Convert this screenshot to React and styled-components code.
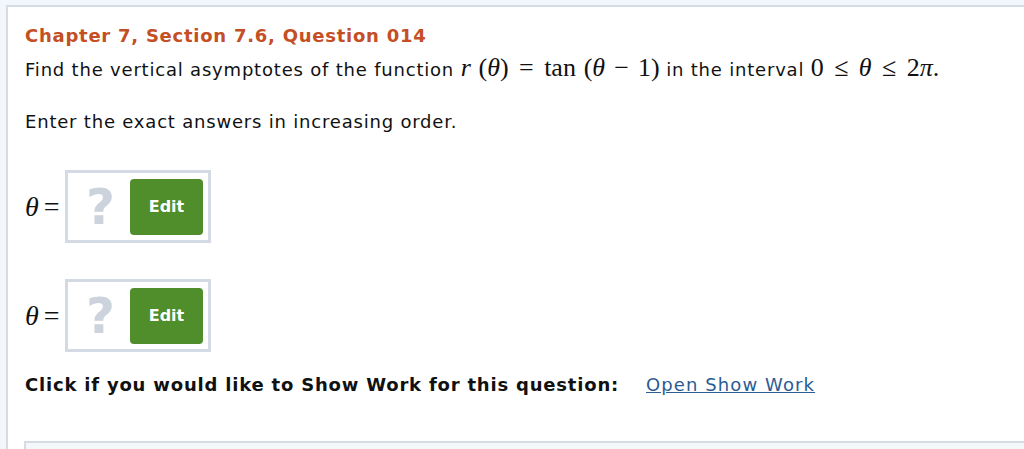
import React from "react";
import styled, { createGlobalStyle } from "styled-components";

const GlobalStyle = createGlobalStyle`
  html, body {
    margin: 0;
    padding: 0;
    background: #f3f6fa;
    overflow: hidden;
  }
`;

const Page = styled.div`
  padding: 5px 0 0 6px;
  height: 449px;
  box-sizing: border-box;
  overflow: hidden;
`;

const Panel = styled.div`
  background: #ffffff;
  border-top: 2px solid #d5dce6;
  border-left: 2px solid #d5dce6;
  height: 100%;
  padding: 17px 0 0 17px;
  box-sizing: border-box;
  font-family: "DejaVu Sans", Verdana, sans-serif;
  color: #111;
`;

const Title = styled.h2`
  margin: 0;
  font-size: 18px;
  font-weight: 700;
  letter-spacing: 0.75px;
  color: #c44f25;
  line-height: 24px;
`;

const Text = styled.p`
  margin: ${({ $mt }) => $mt || 0}px 0 0;
  font-size: 18px;
  letter-spacing: 0.8px;
  line-height: 28px;
  white-space: nowrap;
`;

const Math = styled.span`
  font-family: "Liberation Serif", "Times New Roman", serif;
  font-size: 26px;
  letter-spacing: 0;
  font-style: ${({ $italic }) => ($italic ? "italic" : "normal")};
  margin: ${({ $space }) => $space || "0"};
`;

const AnswerRow = styled.div`
  display: flex;
  align-items: center;
  margin-top: ${({ $mt }) => $mt}px;
`;

const Label = styled.span`
  font-family: "Liberation Serif", "Times New Roman", serif;
  font-size: 28px;
  width: 40px;
  display: flex;
  gap: 5px;
`;

const AnswerBox = styled.div`
  width: 146px;
  height: 73px;
  box-sizing: border-box;
  border: 3px solid #d3dae3;
  display: flex;
  align-items: center;
  padding-left: 18px;
  gap: 16px;
`;

const Unknown = styled.span`
  font-family: "DejaVu Sans", sans-serif;
  font-weight: 700;
  font-size: 50px;
  line-height: 1;
  color: #ccd3dc;
  width: 28px;
  text-align: center;
`;

const EditButton = styled.button`
  width: 73px;
  height: 56px;
  border: none;
  border-radius: 4px;
  background: #4f8e2a;
  color: #fff;
  font-family: "DejaVu Sans", sans-serif;
  font-weight: 700;
  font-size: 16px;
  cursor: pointer;
`;

const ShowWork = styled.div`
  display: flex;
  align-items: baseline;
  gap: 27px;
  margin-top: 22px;
  white-space: nowrap;
`;

const ShowLabel = styled.span`
  font-size: 18px;
  font-weight: 700;
  letter-spacing: 0.8px;
`;

const Link = styled.a`
  font-size: 18px;
  letter-spacing: 1.1px;
  color: #2b5c94;
  text-decoration: underline;
  cursor: pointer;
`;

const WorkArea = styled.div`
  margin-top: 46px;
  margin-left: -1px;
  height: 60px;
  background: #f5f8fb;
  border-top: 2px solid #d5dce6;
  border-left: 2px solid #d5dce6;
`;

const rel = "0 0.4em";
const bin = "0 0.35em";
const fn = "0 0.3em 0 0";

const answers = [{ mt: 34 }, { mt: 36 }];

export default function App() {
  return (
    <>
      <GlobalStyle />
      <Page>
        <Panel>
          <Title>Chapter 7, Section 7.6, Question 014</Title>
          <Text $mt={6}>
            Find the vertical asymptotes of the function{" "}
            <Math $italic $space={fn}>r</Math>
            <Math>(</Math>
            <Math $italic>θ</Math>
            <Math>)</Math>
            <Math $space={rel}>=</Math>
            <Math $space={fn}>tan</Math>
            <Math>(</Math>
            <Math $italic>θ</Math>
            <Math $space={bin}>−</Math>
            <Math>1)</Math> in the interval <Math>0</Math>
            <Math $space={rel}>≤</Math>
            <Math $italic>θ</Math>
            <Math $space={rel}>≤</Math>
            <Math>2</Math>
            <Math $italic>π</Math>
            <Math>.</Math>
          </Text>
          <Text $mt={24}>Enter the exact answers in increasing order.</Text>
          {answers.map((a, i) => (
            <AnswerRow key={i} $mt={a.mt}>
              <Label>
                <i>θ</i>
                <span>=</span>
              </Label>
              <AnswerBox>
                <Unknown>?</Unknown>
                <EditButton>Edit</EditButton>
              </AnswerBox>
            </AnswerRow>
          ))}
          <ShowWork>
            <ShowLabel>Click if you would like to Show Work for this question:</ShowLabel>
            <Link>Open Show Work</Link>
          </ShowWork>
          <WorkArea />
        </Panel>
      </Page>
    </>
  );
}
